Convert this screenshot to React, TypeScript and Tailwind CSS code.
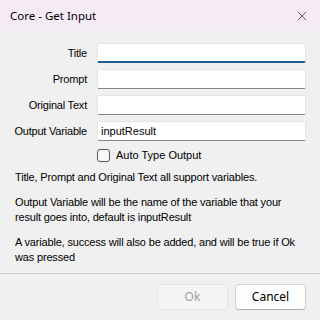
import { X } from 'lucide-react';

const fields = [
  { label: 'Title', value: '', focused: true },
  { label: 'Prompt', value: '' },
  { label: 'Original Text', value: '' },
  { label: 'Output Variable', value: 'inputResult' },
];

export default function App() {
  return (
    <div className="w-[320px] h-[320px] flex flex-col bg-[#f0f0f0] text-[12px] text-black overflow-hidden" style={{ fontFamily: '"Liberation Sans", Arial, sans-serif' }}>
      {/* Title bar */}
      <div className="h-[31px] shrink-0 flex items-center justify-between bg-[#f5ebf5] pl-[10px] pr-[10px]" style={{ fontFamily: '"Noto Sans", sans-serif' }}>
        <span className="text-[11.5px]">Core - Get Input</span>
        <X className="w-[16px] h-[16px] text-[#222]" strokeWidth={1.1} />
      </div>

      {/* Form */}
      <div className="flex-1 flex flex-col pt-[12px]">
        <div className="flex flex-col gap-[6px] pr-[14px]">
          {fields.map(({ label, value, focused }) => (
            <div key={label} className="flex items-center h-[20px]">
              <span className="w-[87px] text-right text-[11px] tracking-[-0.2px]">{label}</span>
              <div
                className={`ml-[10px] flex-1 h-[20px] bg-white rounded-[2px] flex items-center px-[3px] text-[11px] border border-[#e5e5e5] ${
                  focused ? 'border-b-2 border-b-[#1d5f8f]' : 'border-b-[#868686]'
                }`}
              >
                {value}
              </div>
            </div>
          ))}
        </div>

        <div className="flex items-center ml-[97px] mt-[6px] h-[16px] gap-[6px] text-[11px]">
          <div className="w-[13px] h-[13px] rounded-[3px] border border-[#555] bg-[#f8f8f8]" />
          <span>Auto Type Output</span>
        </div>

        <div className="pl-[15px] pr-[14px] mt-[7px] text-[11px] tracking-[-0.17px] leading-[15px] flex flex-col gap-[10px]">
          <p>Title, Prompt and Original Text all support variables.</p>
          <p>Output Variable will be the name of the variable that your result goes into, default is inputResult</p>
          <p>A variable, success will also be added, and will be true if Ok was pressed</p>
        </div>
      </div>

      {/* Footer */}
      <div className="h-[47px] shrink-0 border-t border-[#d0d0d0] flex items-center justify-end gap-[7px] pr-[14px] pb-[1px]" style={{ fontFamily: '"Noto Sans", sans-serif' }}>
        <button className="w-[71px] h-[26px] rounded-[4px] border border-[#e3e3e3] bg-[#f5f5f5] text-[#a0a0a0] text-[12px]">Ok</button>
        <button className="w-[71px] h-[26px] rounded-[4px] border border-[#d0d0d0] border-b-[#b0b0b0] bg-[#fdfdfd] text-[12px]">Cancel</button>
      </div>
    </div>
  );
}
